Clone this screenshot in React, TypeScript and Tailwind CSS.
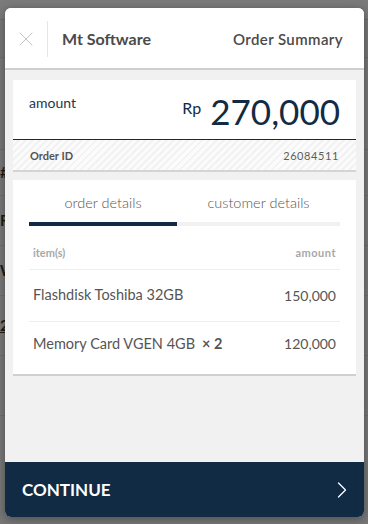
import { ChevronRight, X } from "lucide-react";

const items = [
  { name: "Flashdisk Toshiba 32GB", qty: 1, amount: "150,000" },
  { name: "Memory Card VGEN 4GB", qty: 2, amount: "120,000" },
];

export default function App() {
  return (
    <div
      className="relative h-[524px] w-[368px] overflow-hidden bg-[#777777]"
      style={{ fontFamily: "Lato, 'Noto Sans', sans-serif" }}
    >
      {/* page behind the dim overlay */}
      <div className="flex flex-col text-[#111] opacity-90">
        <div className="h-[20px] border-b border-[#6c6c6c] bg-[#7b7b7b]" />
        <div className="h-[38px] border-b border-[#6c6c6c]" />
        <div className="h-[92px] border-b border-[#6c6c6c]" />
        <div className="flex h-[46px] items-center border-b border-[#6c6c6c] text-[15px] font-bold">#</div>
        <div className="flex h-[50px] items-center border-b border-[#6c6c6c] text-[15px] font-bold">R</div>
        <div className="flex h-[50px] items-center border-b border-[#6c6c6c] text-[15px] font-bold">W</div>
        <div className="flex h-[60px] items-center border-b border-[#6c6c6c] text-[15px] font-bold underline">2</div>
        <div className="h-[60px] border-b border-[#6c6c6c]" />
      </div>

      {/* modal */}
      <div className="absolute left-[5px] top-[8px] flex h-[509px] w-[359px] flex-col overflow-hidden rounded-[6px] bg-[#f1f1f1] shadow-[0_2px_10px_rgba(0,0,0,0.35)]">
        {/* header */}
        <div className="flex h-[62px] shrink-0 items-center border-b-2 border-[#cfcfcf] bg-white pt-[2px]">
          <div className="flex h-[36px] w-[43px] items-center justify-center border-r border-[#e6e6e6]">
            <X className="h-[24px] w-[24px] text-[#c4c4c4]" strokeWidth={1} />
          </div>
          <div className="ml-[14px] flex-1 text-[16px] font-bold text-[#4a4a4a]">Mt Software</div>
          <div className="mr-[21px] text-[15px] font-semibold tracking-[0.4px] text-[#4a4a4a]">Order Summary</div>
        </div>

        {/* body */}
        <div className="flex flex-1 flex-col px-[8px] pt-[10px]">
          <div className="flex h-[60px] shrink-0 items-start justify-between border-b border-[#122b45] bg-white pl-[16px] pr-[16px]">
            <div className="mt-[12px] text-[14px] text-[#1d3550]">amount</div>
            <div className="flex items-start text-[#122b45]">
              <span className="mt-[16px] mr-[9px] text-[16px]">Rp</span>
              <span className="mt-[9px] text-[35px] leading-[44px]">270,000</span>
            </div>
          </div>
          <div className="flex h-[32px] shrink-0 items-center justify-between border-b-2 border-[#d4d4d4] bg-[repeating-linear-gradient(135deg,#fbfbfb_0px,#fbfbfb_3px,#f2f2f2_3px,#f2f2f2_5px)] px-[17px] pt-[2px] text-[11px] text-[#555]">
            <span className="font-bold">Order ID</span>
            <span className="tracking-[0.6px] text-[#5c5c5c]">26084511</span>
          </div>

          <div className="mt-[8px] border-b-2 border-[#d0d0d0] bg-white px-[16px] pb-[8px]">
            <div className="flex">
              <div className="w-[148px] pt-[12px]">
                <div className="pb-[8px] text-center text-[14.5px] font-light text-[#555]">order details</div>
                <div className="h-[4px] bg-[#122b45]" />
              </div>
              <div className="flex-1 pt-[12px]">
                <div className="pb-[8px] text-center text-[14.5px] font-light text-[#555]">customer details</div>
                <div className="h-[4px] bg-[#f1f1f1]" />
              </div>
            </div>

            <div className="flex h-[44px] items-center justify-between border-b border-[#eeeeee] px-[4px] pt-[12px] text-[11px] font-bold text-[#a8a8a8]">
              <span>item(s)</span>
              <span className="tracking-[0.5px]">amount</span>
            </div>
            {items.map((item, i) => (
              <div
                key={item.name}
                className={
                  "flex items-center justify-between px-[4px] text-[#555] " +
                  (i < items.length - 1 ? "h-[52px] border-b border-[#eeeeee]" : "h-[44px]")
                }
              >
                <span className="text-[14.5px]">
                  {item.name}
                  {item.qty > 1 && <span className="ml-[7px] font-bold">× {item.qty}</span>}
                </span>
                <span className="text-[14px]">{item.amount}</span>
              </div>
            ))}
          </div>
        </div>

        {/* footer */}
        <div className="flex h-[55px] shrink-0 items-center justify-between bg-[#122b44] pl-[17px] pr-[14px] text-white">
          <span className="text-[17px] font-bold">CONTINUE</span>
          <ChevronRight className="h-[28px] w-[28px] -mr-[6px]" strokeWidth={1.1} />
        </div>
      </div>
    </div>
  );
}
